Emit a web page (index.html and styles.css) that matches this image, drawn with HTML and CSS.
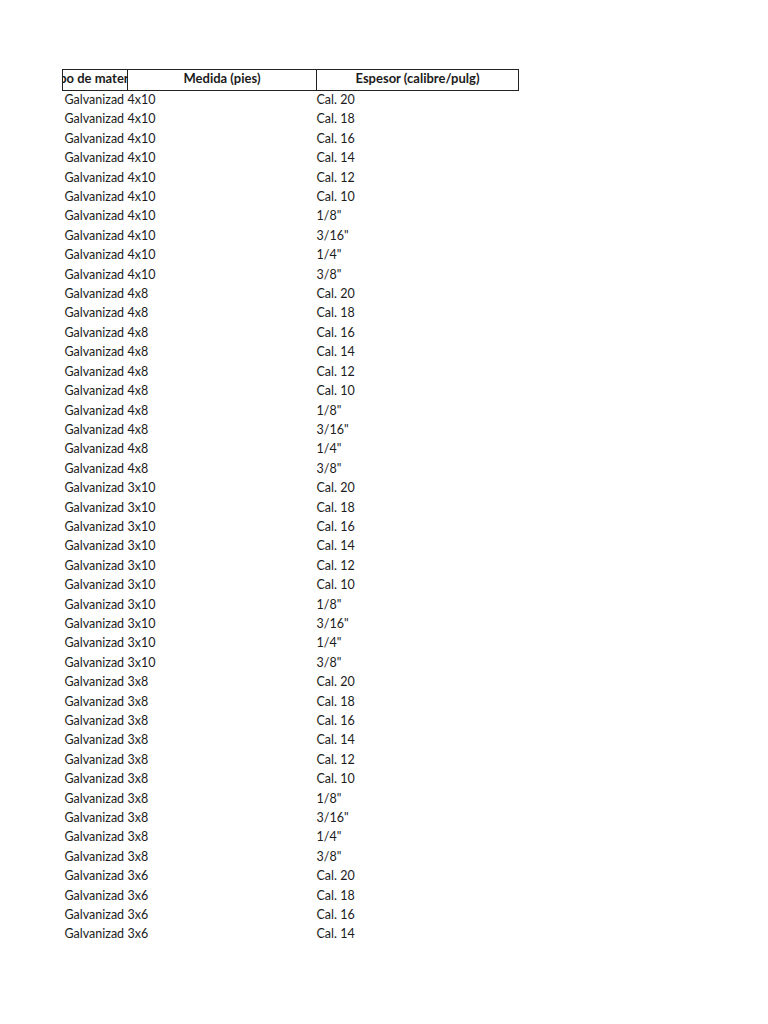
FILE: index.html
```html
<!DOCTYPE html>
<html>
<head>
<meta charset="utf-8">
<link rel="stylesheet" href="styles.css">
</head>
<body>
<table class="sheet">
<colgroup><col class="c1"><col class="c2"><col class="c3"></colgroup>
<thead>
<tr class="head"><th><div class="clip">Tipo de material</div></th><th><div class="clip">Medida (pies)</div></th><th><div class="clip">Espesor (calibre/pulg)</div></th></tr>
</thead>
<tbody>
<tr><td>Galvanizad</td><td>4x10</td><td>Cal. 20</td></tr>
<tr><td>Galvanizad</td><td>4x10</td><td>Cal. 18</td></tr>
<tr><td>Galvanizad</td><td>4x10</td><td>Cal. 16</td></tr>
<tr><td>Galvanizad</td><td>4x10</td><td>Cal. 14</td></tr>
<tr><td>Galvanizad</td><td>4x10</td><td>Cal. 12</td></tr>
<tr><td>Galvanizad</td><td>4x10</td><td>Cal. 10</td></tr>
<tr><td>Galvanizad</td><td>4x10</td><td>1/8"</td></tr>
<tr><td>Galvanizad</td><td>4x10</td><td>3/16"</td></tr>
<tr><td>Galvanizad</td><td>4x10</td><td>1/4"</td></tr>
<tr><td>Galvanizad</td><td>4x10</td><td>3/8"</td></tr>
<tr><td>Galvanizad</td><td>4x8</td><td>Cal. 20</td></tr>
<tr><td>Galvanizad</td><td>4x8</td><td>Cal. 18</td></tr>
<tr><td>Galvanizad</td><td>4x8</td><td>Cal. 16</td></tr>
<tr><td>Galvanizad</td><td>4x8</td><td>Cal. 14</td></tr>
<tr><td>Galvanizad</td><td>4x8</td><td>Cal. 12</td></tr>
<tr><td>Galvanizad</td><td>4x8</td><td>Cal. 10</td></tr>
<tr><td>Galvanizad</td><td>4x8</td><td>1/8"</td></tr>
<tr><td>Galvanizad</td><td>4x8</td><td>3/16"</td></tr>
<tr><td>Galvanizad</td><td>4x8</td><td>1/4"</td></tr>
<tr><td>Galvanizad</td><td>4x8</td><td>3/8"</td></tr>
<tr><td>Galvanizad</td><td>3x10</td><td>Cal. 20</td></tr>
<tr><td>Galvanizad</td><td>3x10</td><td>Cal. 18</td></tr>
<tr><td>Galvanizad</td><td>3x10</td><td>Cal. 16</td></tr>
<tr><td>Galvanizad</td><td>3x10</td><td>Cal. 14</td></tr>
<tr><td>Galvanizad</td><td>3x10</td><td>Cal. 12</td></tr>
<tr><td>Galvanizad</td><td>3x10</td><td>Cal. 10</td></tr>
<tr><td>Galvanizad</td><td>3x10</td><td>1/8"</td></tr>
<tr><td>Galvanizad</td><td>3x10</td><td>3/16"</td></tr>
<tr><td>Galvanizad</td><td>3x10</td><td>1/4"</td></tr>
<tr><td>Galvanizad</td><td>3x10</td><td>3/8"</td></tr>
<tr><td>Galvanizad</td><td>3x8</td><td>Cal. 20</td></tr>
<tr><td>Galvanizad</td><td>3x8</td><td>Cal. 18</td></tr>
<tr><td>Galvanizad</td><td>3x8</td><td>Cal. 16</td></tr>
<tr><td>Galvanizad</td><td>3x8</td><td>Cal. 14</td></tr>
<tr><td>Galvanizad</td><td>3x8</td><td>Cal. 12</td></tr>
<tr><td>Galvanizad</td><td>3x8</td><td>Cal. 10</td></tr>
<tr><td>Galvanizad</td><td>3x8</td><td>1/8"</td></tr>
<tr><td>Galvanizad</td><td>3x8</td><td>3/16"</td></tr>
<tr><td>Galvanizad</td><td>3x8</td><td>1/4"</td></tr>
<tr><td>Galvanizad</td><td>3x8</td><td>3/8"</td></tr>
<tr><td>Galvanizad</td><td>3x6</td><td>Cal. 20</td></tr>
<tr><td>Galvanizad</td><td>3x6</td><td>Cal. 18</td></tr>
<tr><td>Galvanizad</td><td>3x6</td><td>Cal. 16</td></tr>
<tr><td>Galvanizad</td><td>3x6</td><td>Cal. 14</td></tr>
</tbody>
</table>
</body>
</html>
```
FILE: styles.css
```css
html, body {
  margin: 0;
  padding: 0;
  background: #ffffff;
}
body {
  padding: 69px 0 0 62px;
  font-family: Lato, "Liberation Sans", sans-serif;
  font-size: 12.5px;
  color: #1c1c1c;
}
.sheet {
  border-collapse: collapse;
  table-layout: fixed;
  width: 456px;
}
.c1 { width: 65px; }
.c2 { width: 189px; }
.c3 { width: 202px; }
.head th {
  height: 20px;
  padding: 0;
  border: 1px solid #222222;
  font-size: 13px;
  font-weight: 700;
  overflow: hidden;
  vertical-align: top;
}
.clip {
  display: flex;
  justify-content: center;
  align-items: center;
  overflow: hidden;
  white-space: nowrap;
  height: 16px;
  padding-bottom: 3px;
}
tbody tr {
  height: 19.4px;
}
tbody td {
  padding: 0 0 1px 0;
  white-space: nowrap;
  vertical-align: middle;
  line-height: 18.4px;
}
tbody td:first-child {
  padding-left: 2px;
}
```
